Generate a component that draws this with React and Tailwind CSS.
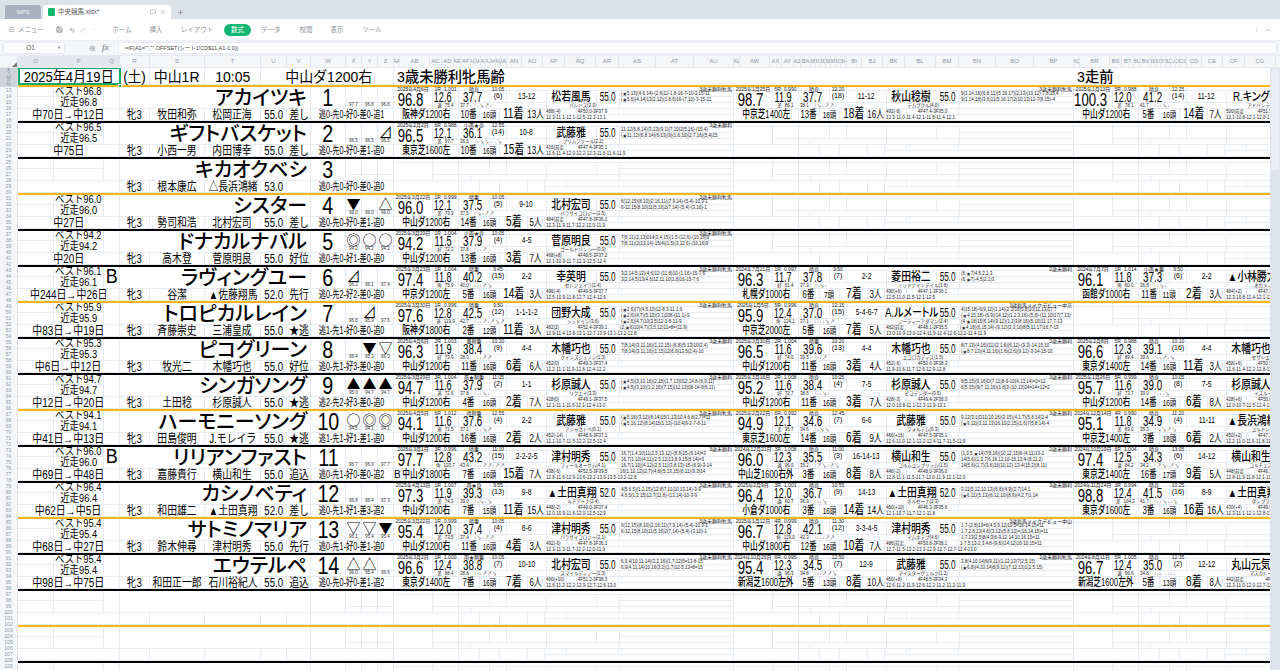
import React from "react";
import { Menu, Undo2, Redo2, ZoomIn, Plus, X, MessageSquare, EllipsisVertical, ChevronDown, Save } from "lucide-react";

const COLS = [
  ["AA", 6], ["AB", 30], ["AC", 12], ["AD", 12], ["AE", 7], ["AF", 10], ["AG", 5], ["AH", 5], ["AI", 5], ["AJ", 5], ["AK", 5],
  ["AL", 5], ["AM", 6], ["AN", 15], ["AO", 21], ["AP", 22], ["AQ", 31], ["AR", 23], ["AS", 37], ["AT", 38], ["AU", 40],
];
const COLS2 = ["AV", "AW", "AX", "AY", "AZ", "BA", "BB", "BC", "BD", "BE", "BF", "BG", "BH", "BI", "BJ", "BK", "BL", "BM", "BN", "BO", "BP"];
const COLS3 = ["BQ", "BR", "BS", "BT", "BU", "BV", "BW", "BX", "BY", "BZ", "CA", "CB", "CC", "CD", "CE", "CF", "CG", "CH", "CI", "CJ", "CK"];
const LEFT_COLS = [["O", 36], ["P", 50], ["Q", 16], ["R", 30], ["S", 55], ["T", 56], ["U", 26], ["V", 24], ["W", 35], ["X", 16], ["Y", 16], ["Z", 16]];

// date, race, ratio, weather, time, label, idx, f1, l3, pop, corner, jockey, wt, pass, pos, posv, l3b, arrows, winner, course, no, head, finish, ninki, wgt, split, laps
const R = (...a) => a;

const HORSES = [
  { best: "96.8", name: "アカイツキ", no: 1, period: "中70日→中12日", trainer: "牧田和弥", rider: "松岡正海", wt: "55.0", style: "差し", tally: "逃0-先0-好0-差0-追1", marks: ["", "", ""], vals: ["97.7", "96.8", "96.8"], runs: [
    R("2025年4月6日", "1R", "1.001", "晴良", "10:05", "3歳未勝利牝馬", "96.8", "12.6", "37.7", "(6)", "13-12", "松若風馬", "55.0", ["(★5,13)(4,6,14)-(2,6)12-1,8-16-7-10-3,15-11", "(★5,6)(4,14)13(2,12)(1,8,6)16-(7,10)-3-15-11"], "遠", "75.4", "37.7", "↑↓↘↗↓", "パレハス(2.0)", "阪神ダ1200右", "10番", "16頭", "11着", "13人", "488(-4)", "4F50.0-3F37.9", "12.3-11.1-12.1-12.5-12.3-13.1"),
    R("2025年1月25日", "5R", "0.990", "晴良", "12:20", "3歳未勝利牝馬", "98.7", "11.9", "37.7", "(18)", "11-12", "秋山稔樹", "55.0", ["9(1,14,18)(6,8,11)(5,16,17)(2,13)(10,12)-7,8,15,4", "9(1,14,18)(3,6)11(5,16,17)2(10,13)12-7(8,15)-4"], "差", "86.1", "38.1", "↑↘↓↗↗↓", "テムグクル(4.0)", "中京芝1400左", "13番", "18頭", "18着", "16人", "492(-8)", "4F47.4-3F35.3", "12.3-11.0-11.4-12.1-11.8-11.4-12.1"),
    R("2025年1月13日", "5R", "0.988", "晴良", "12:25", "3歳未勝利", "100.3", "12.0", "41.2", "(14)", "11-12", "R.キング", "55.0", [], "差", "78.1", "41.7", "↑↓↓↘↓", "アドバンテージ", "中山ダ1200右", "5番", "16頭", "14着", "7人", "500(前走", "4F51.5-3F40.2", "12.1-10.8-12.1-12.8-13.1"),
  ] },
  { best: "96.5", name: "ギフトバスケット", no: 2, period: "中75日", trainer: "小西一男", rider: "内田博幸", wt: "55.0", style: "差し", tally: "逃0-先0-好0-差1-追0", marks: ["", "", "⊿"], vals: ["96.5", "96.5", "96.5"], runs: [
    R("2025年2月2日", "6R", "0.988", "小雨★良", "12:55", "3歳未勝利", "96.5", "12.1", "36.1", "(14)", "10-8", "武藤雅", "55.0", ["11,12(6,8,14)(3,13)(9,1)(7,10)2(5,16)-(15,4)", "(★11,12)(6,8,14)(6,13)(9)(1,6,10)(2,7,16)(5,4)15"], "差", "97.7", "36.5", "↑↓↘↘↓→↘", "プリムファール(2.2)", "東京芝1600左", "10番", "16頭", "15着", "13人", "416(前走", "4F47.4-3F35.1", "12.6-11.4-12.0-12.2-12.3-11.6-11.6-11.9"),
  ] },
  { name: "キカオクベシ", no: 3, period: "", trainer: "根本康広", rider: "△長浜鴻緒", wt: "53.0", style: "", tally: "逃0-先0-好0-差0-追0", marks: ["", "", ""], vals: ["", "", ""], runs: [] },
  { best: "96.0", name: "シスター", no: 4, period: "中27日", trainer: "勢司和浩", rider: "北村宏司", wt: "55.0", style: "差し", tally: "逃0-先0-好0-差1-追0", marks: ["▼", "", "△"], vals: ["96.0", "96.0", "96.0"], runs: [
    R("2025年3月22日", "1R", "0.999", "晴重", "10:05", "3歳未勝利牝馬", "96.0", "12.1", "37.5", "(5)", "9-10", "北村宏司", "55.0", ["6(12,15)(8,10)(2,16,11)(7,9,14)-(5,4)-10,3-1", "6-12,15(8,10)11(5,16)2(7,14)-(5,4)-(3,10)-1"], "差", "73.9", "37.5", "↑↘↓↗↗", "バラサイコロジー(2.5)", "中山ダ1200右", "14番", "16頭", "5着", "5人", "484(前走", "4F47.8-3F36.1", "12.3-11.9-11.7-12.2-12.0-11.9"),
  ] },
  { best: "94.2", name: "ドナカルナバル", no: 5, period: "中20日", trainer: "高木登", rider: "菅原明良", wt: "55.0", style: "好位", tally: "逃0-先0-好1-差0-追0", marks: ["◎", "○", "○"], vals: ["94.2", "94.2", "94.2"], runs: [
    R("2025年3月29日", "1R", "1.004", "小雨★良", "10:05", "3歳未勝利牝馬", "94.2", "11.5", "37.9", "(4)", "4-5", "菅原明良", "55.0", ["7(8,11)(2,13)014(3,4,15)(1,5-(12,6)-(10,16)9", "7(8,11)(2(13,14)-15(4)(1,5)(3,12,6)-(10,16)9"], "好", "72.3", "37.8", "↑↓↓↗→", "ゴールドバンシー(0.9)", "中山ダ1200右", "13番", "16頭", "3着", "7人", "468(+8)", "4F49.5-3F37.2", "12.1-10.9-11.7-12.3-12.5-12.4"),
  ] },
  { best: "96.1", tag: "B", name: "ラヴィングユー", no: 6, period: "中244日→中26日", trainer: "谷潔", rider: "▲佐藤翔馬", wt: "52.0", style: "先行", tally: "逃0-先2-好2-差0-追0", marks: ["⊿", "", ""], vals: ["96.2", "96.1", "97.4"], runs: [
    R("2025年3月23日", "1R", "1.004", "晴重", "9:45", "3歳未勝利牝馬", "97.4", "11.8", "40.2", "(15)", "2-2", "幸英明", "55.0", ["3(2,14,5,13)(4,6)12-(11,8)10-(1,16)-15-7,6", "3(2,14,5)13(4,6)12,11,10(1,8)16-15-7,6"], "角", "75.9", "40.0", "↑↓↓↗↘", "セレジェイラ(2.4)", "中京ダ1200左", "5番", "16頭", "14着", "3人", "496(-4)", "4F49.5-3F37.7", "12.5-10.9-11.8-12.7-12.4-12.6"),
    R("2024年7月21日", "1R", "0.997", "晴良", "9:50", "2歳未勝利", "96.3", "11.7", "37.8", "(7)", "2-2", "菱田裕二", "55.0", ["(6,★7)4,5,2,1,3", "(6,★7)-4,5(2,1)3"], "好", "61.4", "37.9", "↑↓↘↓", "ミッドナイトデイル(1.8)", "札幌ダ1000右", "6番", "7頭", "7着", "3人", "490(+6)", "4F47.1-3F36.1", "12.5-11.0-11.5-12.1-12.5"),
    R("2024年7月7日", "1R", "1.014", "小雨★重", "9:50", "2歳新馬", "96.1", "11.8", "37.3", "(6)", "2-2", "▲小林勝太", "55.0", [], "角", "60.0", "36.8", "↑↓↘↓", "オカメノ", "函館ダ1000右", "11番", "11頭", "2着", "3人", "484(+2)", "4F47.2-3F36.0", "12.3-10.8-11.4-12.1-12.1"),
  ] },
  { best: "95.9", name: "トロピカルレイン", no: 7, period: "中83日→中19日", trainer: "斉藤崇史", rider: "三浦皇成", wt: "55.0", style: "★逃", tally: "逃1-先1-好0-差0-追0", marks: ["", "⊿", ""], vals: ["96.8", "95.9", "97.6"], runs: [
    R("2025年3月30日", "1R", "0.996", "晴重", "9:50", "3歳未勝利牝馬", "97.6", "12.8", "42.5", "(12)", "1-1-1-2", "団野大成", "55.0", ["(★2,6)(7)(4,5,10)12-8,3-11,1,9", "(★2,6)(4,7)(5,10)(3,1)208-(11,1)-9", "(★2,6)(4,7)10(3,5)12-1-8-11-9", "(2,★6)10(4,7)(3,5,12)11=8=(11,9)"], "逃", "119.9", "42.7", "↑↓↓↗↓↗↘↗", "シュドゥン(3.6)", "阪神ダ1800右", "2番", "12頭", "11着", "3人", "482(2)", "4F52.4-3F39.1", "12.9-11.4-13.8-13.1-12.7-13.9-13.1-13.2-12.8"),
    R("2025年1月5日", "5R", "0.996", "晴良", "12:15", "3歳新馬メイクデビュー中京", "95.9", "12.4", "37.0", "(15)", "5-4-6-7", "A.ルメートル", "55.0", ["4(15,18)-6(9,12)(1,14)(2,3)16(5,8)10(11,13)17,7", "(★4,15,18)-(6,9)(14,12)(1,2,3,16)-(5,8)-(11,10)17(7,13)", "(4,★18)15(6,14)(9,12)(1,2)3(8,16)(5,10)11,17,7-13", "(★4,18)(6,15,14)-(9,12)(2,3,10)8(5,11,17)16,7-13"], "角", "124.1", "37.1", "↑↓↓↓↘↗", "ジーティーアダマン(2.4)", "中京芝2000左", "5番", "16頭", "7着", "5人", "482(前走", "4F48.1-3F35.5", "13.0-10.9-13.0-12.4-11.9-12.4-12.6-12.2-11.4-11.9"),
  ] },
  { best: "95.3", name: "ピコグリーン", no: 8, period: "中6日→中12日", trainer: "牧光二", rider: "木幡巧也", wt: "55.0", style: "好位", tally: "逃0-先1-好3-差0-追0", marks: ["", "▼", "▽"], vals: ["96.4", "95.3", "96.3"], runs: [
    R("2025年4月6日", "2R", "1.003", "曇稍重", "10:20", "3歳未勝利", "96.3", "11.9", "38.4", "(9)", "4-4", "木幡巧也", "55.0", ["7(8,14)(3,11,16)(1,12,15)-(6,8)(5,13)10(2,4)", "7(8,14)(3,11,16)(1,15)12(6,9)13,5(2,4)-10"], "好", "73.9", "38.3", "↑↓↓↗↗", "クインズジュノン(1.3)", "中山ダ1200右", "11番", "16頭", "6着", "6人", "452(0)", "4F49.3-3F37.4", "12.2-11.1-11.9-12.8-12.4-12.2"),
    R("2025年3月30日", "2R", "1.004", "晴重", "10:20", "3歳未勝利", "96.5", "11.6", "39.6", "(13)", "4-4", "木幡巧也", "55.0", ["8(7,13)(4,16)(11)(2,1,6)(6,12)-(9,3)-14,15,10", "(★8,7,13)(4,11,16)(1,6)(2,6)(9,12)-3-14-15-10"], "好", "74.0", "39.5", "↑↓↓↗", "エコロカディス(1.5)", "中山ダ1200右", "11番", "16頭", "3着", "4人", "452(-6)", "4F50.0-3F38.3", "11.9-10.6-11.7-12.6-12.9-12.8"),
    R("2025年2月8日", "5R", "0.988", "晴良", "10:10", "3歳未勝利", "96.6", "12.3", "39.1", "(16)", "4-4", "木幡巧也", "55.0", [], "好", "89.4", "39.6", "↑↓↓↗↓↘", "セザレエル", "東京ダ1400左", "14番", "16頭", "11着", "3人", "458(+6)", "4F50.5-3F38.3", "12.6-11.4-12.2-12.8-12.6"),
  ] },
  { best: "94.7", name: "シンガソング", no: 9, period: "中12日→中20日", trainer: "土田稔", rider: "杉原誠人", wt: "55.0", style: "★逃", tally: "逃2-先2-好3-差0-追0", marks: ["▲", "▲", "▲"], vals: ["95.0", "94.7", "94.7"], runs: [
    R("2025年3月29日", "3R", "1.004", "雨★稍重", "11:05", "3歳未勝利", "94.7", "11.6", "37.9", "(2)", "1-1", "杉原誠人", "55.0", ["(★4,5)(3,10,16)(2,15)(1,7,13)012,14,8-(6,9,11)", "(★4,5)(3,10)(1,2,16)(7,15)(12,13)08-14-9(6,11)"], "逃", "72.6", "37.8", "↑↓↓↘↓", "リクエイ(3.3)", "中山ダ1200右", "4番", "16頭", "2着", "7人", "428(0)", "4F49.1-3F37.5", "12.1-11.1-11.6-12.1-12.4-13.0"),
    R("2025年3月16日", "2R", "1.008", "晴良", "10:25", "3歳未勝利", "95.2", "11.6", "38.4", "(4)", "7-5", "杉原誠人", "55.0", ["6(5,15)(9,16)D(7,11)8-9-10(4,13,14)=2=12", "6(5,15)(9(7,11,16)(1,8)3-(10,13)24=14=12=2"], "好", "72.7", "38.5", "↑↓↓↘↓", "ビコテンダー(0.5)", "中山ダ1200右", "11番", "16頭", "3着", "7人", "428(-3)", "4F49.4-3F38.3", "12.0-10.8-11.1-12.3-12.9-13.1"),
    R("2025年1月26日", "5R", "0.999", "晴良", "10:05", "3歳未勝利", "95.7", "11.6", "39.0", "(8)", "7-5", "杉原誠人", "55.0", [], "好", "73.7", "39.0", "↑↓↓↓↘", "イズルー", "中山ダ1200右", "14番", "16頭", "6着", "8人", "428(+6)", "4F50.0-3F38.0", "12.0-10.7-11.5-12.4-12.6"),
  ] },
  { best: "94.1", name: "ハーモニーソング", no: 10, period: "中41日→中13日", trainer: "田島俊明", rider: "J.モレイラ", wt: "55.0", style: "★逃", tally: "逃1-先1-好1-差1-追0", marks: ["○", "◎", "◎"], vals: ["94.5", "94.1", "94.1"], runs: [
    R("2025年4月5日", "6R", "1.012", "晴稍重", "12:55", "3歳未勝利牝馬", "94.1", "11.6", "37.6", "(4)", "2-2", "武藤雅", "55.0", ["(★5,16)(3,12)(8,14)15(1,13)10,4,6,8(2,7)=11", "(★5,16,12)(8,14)15(1,13)-(10,4)9-2-7-8-11"], "逃", "71.5", "37.1", "↑↓↓↘↗", "アシャカトベ(0.1)", "中山ダ1200右", "16番", "16頭", "2着", "2人", "452(-14)", "4F48.6-3F37.1", "12.1-10.7-11.5-12.2-12.5-12.4"),
    R("2025年2月22日", "6R", "0.992", "晴良", "12:45", "3歳未勝利", "94.9", "12.1", "34.6", "(7)", "6-6", "武藤雅", "55.0", ["9,12(3,1)D11(10,16)(2,15)(4,1,7)(5,8,14)2-4", "(★9,12)(3,11,13)16,10(2,15)(1,6)7(5,8,14)-4"], "差", "95.7", "34.6", "↑↓↘↘", "フォルテム(0.3)", "東京芝1600左", "14番", "16頭", "6着", "9人", "466(+16)", "4F47.5-3F35.1", "12.6-11.0-12.1-12.2-12.4-11.7-11.5-11.9"),
    R("2024年12月14日", "4R", "0.990", "晴良", "11:20", "2歳未勝利", "95.1", "11.8", "34.9", "(4)", "11-11", "▲長浜鴻緒", "55.0", [], "差", "83.0", "35.3", "↑↘↘↗↘→", "ユルドンク", "中京芝1400左", "3番", "18頭", "6着", "2人", "450(+2)", "4F47.2-3F35.4", "12.2-11.0-11.6-11.8-11.9"),
  ] },
  { best: "96.0", tag: "B", name: "リリアンファスト", no: 11, period: "中69日→中48日", trainer: "嘉藤貴行", rider: "横山和生", wt: "55.0", style: "追込", tally: "逃0-先1-好0-差0-追2", marks: ["", "", ""], vals: ["96.7", "96.0", "97.7"], blink: true, runs: [
    R("2025年3月1日", "3R", "0.996", "晴重", "11:10", "3歳未勝利", "97.7", "12.8", "43.2", "(15)", "2-2-2-5", "津村明秀", "55.0", ["16,7(1,4,10)11(2,5,13,12)-(8,6)15-(6,14)=3", "16,7(1,10)(4,11)(2,5,12)13,8,9,15(6,14)=3", "16,7(1,10)(4,12)(2,5,11)(3,8,13)-15-(6,9)-3-14", "16(1,10,12)(2,7)(4,8)(5,13,15)(6,11)(9,3)14"], "角", "120.7", "43.4", "↑↓↓↗↗↓↗↗", "フィールオーサム(4.1)", "中山ダ1800右", "7番", "16頭", "15着", "7人", "438(-6)", "4F52.5-3F39.5", "12.8-11.6-12.9-13.6-13.2-13.0-13.5-13.2-12.8"),
    R("2024年12月21日", "3R", "1.008", "晴良", "11:00", "2歳未勝利", "96.0", "12.3", "35.5", "(3)", "16-14-13", "横山和生", "55.0", ["(1,3,5,★14)7(8,16)(10,12,15)8-(4,11)13-2", "14(5,6)(1,3,7)6,16,12,10-15,13,4-(8,11,2)", "14(5,6)(1,7)(3,6)16(10,12)-13-4(15,2)(8,11)"], "遠", "96.0", "35.2", "↑↗↘↑↗↘", "コルムユンプリュム(1.5)", "中山芝1600右外", "3番", "16頭", "8着", "8人", "446(-2)", "4F48.0-3F36.0", "12.8-11.1-11.5-11.7-12.0-11.9-12.1-12.0"),
    R("2024年10月19日", "6R", "1.004", "晴良", "13:05", "2歳新馬", "97.4", "12.5", "34.3", "(6)", "14-12", "横山和生", "55.0", [], "遠", "84.2", "34.2", "↑↗↘↑↗↘", "コルチェスタ", "東京芝1400左", "16番", "17頭", "9着", "5人", "448(前走", "4F46.3-3F34.1", "12.8-11.9-11.8-12.1-11.8"),
  ] },
  { best: "96.4", name: "カシノベティ", no: 12, period: "中62日→中5日", trainer: "和田雄二", rider: "▲土田真翔", wt: "52.0", style: "差し", tally: "逃0-先1-好1-差3-追2", marks: ["", "", ""], vals: ["96.8", "96.4", "97.3"], runs: [
    R("2025年4月13日", "1R", "1.007", "雨★良", "9:55", "3歳未勝利牝馬", "97.3", "11.9", "39.3", "(13)", "9-8", "▲土田真翔", "52.0", ["4(5,6,5)(1,2,15)(12,8)7,11(10,13,14)-3-9", "4,6,5(1,2,15)12,7(11,8)-(13,14)-10-3-9"], "差", "74.3", "39.0", "↑↓↘↓↘", "ルチアーナ(2.4)", "中山ダ1200右", "7番", "15頭", "11着", "15人", "448(-2)", "4F49.0-3F37.4", "12.0-10.9-11.6-12.0-12.5-12.9"),
    R("2025年2月9日", "3R", "1.001", "晴良", "10:55", "3歳未勝利", "96.4", "12.0", "36.7", "(9)", "14-13", "▲土田真翔", "52.0", ["3,11(5,12,10,13)(6,8)(4,9)(2,7)14,1", "(★6,11)(5,13)(6,12,10)(8,9)(4,2,7)1,14"], "遠", "60.7", "36.9", "↑↓↓↘", "ボルセーナ(2.3)", "小倉ダ1000右", "3番", "16頭", "14着", "14人", "450(+10)", "4F46.3-3F35.6", "12.1-10.7-11.7-12.1-11.8"),
    R("2024年11月24日", "3R", "0.994", "晴良", "10:25", "2歳未勝利", "98.8", "12.4", "41.5", "(16)", "8-9", "▲土田真翔", "55.0", [], "差", "104.3", "41.7", "↑↓↓↘↓↓↘", "ダンプファ", "東京ダ1600左", "3番", "16頭", "16着", "16人", "430(+4)", "4F49.9-3F38.3", "12.3-11.1-12.1-12.8-13.1"),
  ] },
  { best: "95.4", name: "サトミノマリア", no: 13, period: "中68日→中27日", trainer: "鈴木伸尋", rider: "津村明秀", wt: "55.0", style: "先行", tally: "逃0-先1-好0-差1-追0", marks: ["▽", "▽", "▼"], vals: ["96.1", "95.4", "95.4"], runs: [
    R("2025年3月22日", "1R", "0.999", "晴重", "10:05", "3歳未勝利牝馬", "95.4", "12.0", "37.4", "(4)", "8-6", "津村明秀", "55.0", ["6(12,15)(8,10)(2,16,11)(7,9,14)-(5,4)-10,3-1", "6-12,15(8,10)11(5,16)2(7,14)-(5,4)-(3,10)-1"], "差", "73.5", "37.4", "↑↘↓↗↗", "バラサイコロジー(2.1)", "中山ダ1200右", "11番", "16頭", "4着", "3人", "492(-6)", "4F47.8-3F36.1", "12.3-11.3-11.7-12.2-12.0-11.9"),
    R("2025年1月12日", "4R", "0.999", "晴良", "11:30", "3歳新馬メイクデビュー中山", "96.7", "12.8", "42.1", "(12)", "3-3-4-5", "津村明秀", "55.0", ["1,7-(2,8)13=6(4,5,9,12)10,5=16-14,15=11", "1,7,2,8,13(4,6)(3,12)(5,8,10)=(16,14,15)=11", "1,7,13(2,5)8(4,3)6-9,12,14,10,16,15=11", "1-7,5,13-2,3,4,8-(9,6)(14,12)16-10,15=11"], "角", "119.0", "42.3", "↑↓↓↓↗↗", "イムホテプ(4.6)", "中山ダ1800右", "12番", "16頭", "10着", "7人", "486(前走", "4F50.8-3F38.1", "12.7-11.5-13.2-13.3-12.9-12.7-12.7-12.4-13.0"),
  ] },
  { best: "95.4", name: "エウテルペ", no: 14, period: "中98日→中75日", trainer: "和田正一郎", rider: "石川裕紀人", wt: "55.0", style: "追込", tally: "逃0-先0-好0-差1-追2", marks: ["△", "△", ""], vals: ["96.0", "95.4", "96.6"], runs: [
    R("2025年3月2日", "1R", "1.000", "雨★稍重", "10:05", "3歳未勝利牝馬", "96.6", "12.4", "38.8", "(7)", "10-10", "北村宏司", "55.0", ["6,9,4(10,11,14)(3,2,16)(1,7,12)5=13-8-15", "6,9(4,11,14)10,16(3,2)(1,7)12-5,13=8=15"], "差", "88.4", "38.8", "↑↓↓↗↗↘", "スマイルディジー(1.3)", "東京ダ1400左", "7番", "16頭", "7着", "6人", "460(+10)", "4F51.2-3F38.3", "12.6-11.2-12.2-12.9-12.7-12.6-13.0"),
    R("2024年10月26日", "6R", "0.995", "晴良", "12:50", "2歳未勝利牝馬", "95.4", "12.3", "34.5", "(7)", "12-9", "武藤雅", "55.0", ["3,8(4,10,14)6(9,11)(1,12,13)7(2,5,15)", "(★6,8)(4,10,14)6(9,11)(7,12,13)1(2,5,15)"], "遠", "96.3", "34.8", "↑↓↓↗↗↘", "マイスターヴェルク(1.2)", "新潟芝1600左外", "5番", "13頭", "8着", "10人", "450(+8)", "4F48.5-3F34.3", "12.6-11.2-11.9-12.6-12.2-11.2-11.2-11.9"),
    R("2024年8月11日", "5R", "1.005", "晴良", "12:35", "2歳新馬", "96.7", "12.4", "35.0", "(2)", "12-12", "丸山元気", "55.0", [], "遠", "96.6", "34.8", "↑↓↓→↑↓↓", "マスカレード", "新潟芝1600左外", "5番", "13頭", "8着", "8人", "442(前走", "4F47.8", "12.3-11.0-12.0-12.7-12.1"),
  ] },
  {},
  {},
  {},
];

const grid = "border-r border-b border-[#e6eaf2]";
const center = "flex items-center justify-center whitespace-nowrap";

const RunBlock = ({ run, tag }) => {
  const [date, race, ratio, weather, time, label, idx, f1, l3, pop, corner, jockey, wt, pass, pos, posv, l3b, arrows, winner, course, no, head, finish, ninki, wgt, split, laps] = run || [];
  const lines = pass || [];
  return (
    <div className="flex flex-col shrink-0 w-[340px] text-black">
      <div className="flex h-[4px] text-[5px] leading-[4px] text-[#222]">
        <div className={`w-[39px] ${grid} ${center}`}>{date}</div>
        <div className={`w-[26px] ${grid} ${center} gap-[3px]`}><span>{race}</span><span>{ratio}</span></div>
        <div className={`w-[31px] ${grid} ${center}`}>{weather}</div>
        <div className={`w-[17px] ${grid} ${center}`}>{time}</div>
        <div className={`flex-1 ${grid} flex justify-end whitespace-nowrap pr-px`}>{label}</div>
      </div>
      <div className="flex h-[18px]">
        <div className={`w-[39px] pr-[4px] ${grid} ${center}`}>
          <span className="inline-block scale-x-[.73] text-[18px] leading-none">{idx}</span>
        </div>
        <div className="flex flex-col w-[187px]">
          <div className="flex h-[12px]">
            <div className={`w-[26px] pr-[5px] ${grid} ${center}`}><span className="inline-block scale-x-[.65] text-[14px] leading-none">{f1}</span></div>
            <div className={`w-[31px] pr-[3px] ${grid} ${center}`}><span className="inline-block scale-x-[.7] text-[14px] leading-none">{l3}</span></div>
            <div className={`w-[17px] ${grid} ${center} text-[7px]`}>{pop}</div>
            <div className={`w-[40px] ${grid} ${center}`}><span className="inline-block scale-x-[.75] text-[9px] leading-none">{corner}</span></div>
            <div className={`w-[50px] ${grid} ${center}`}><span className="inline-block scale-x-[.82] text-[12px] leading-none font-medium [font-feature-settings:'palt']">{jockey}</span></div>
            <div className={`w-[23px] ${grid} ${center}`}><span className="inline-block scale-x-[.68] text-[12px] leading-none">{wt}</span></div>
          </div>
          <div className="flex h-[6px] text-[4.5px] leading-[6px] text-[#222]">
            <div className={`w-[26px] ${grid} ${center} gap-[3px]`}><span>{pos}</span><span>{posv}</span></div>
            <div className={`w-[12px] ${grid} ${center}`}>{l3b}</div>
            <div className={`w-[76px] ${grid} whitespace-nowrap pl-[3px] tracking-[.5px]`}>{arrows}</div>
            <div className={`w-[73px] ${grid} ${center}`}>{winner}</div>
          </div>
        </div>
        <div className="flex flex-col w-[114px] text-[4.5px] leading-[6px] text-[#222]">
          <div className={`h-[6px] ${grid} whitespace-nowrap pl-px`}>{lines[0]}</div>
          <div className={`h-[6px] ${grid} whitespace-nowrap pl-px`}>{lines[1]}</div>
          <div className={`h-[6px] ${grid} whitespace-nowrap pl-px`}>{lines[2]}</div>
        </div>
      </div>
      <div className="flex h-[12px]">
        <div className={`w-[65px] ${grid} ${center} relative`}>
          {tag && <span className="absolute left-0 top-0 text-[10px] leading-[12px]">{tag}</span>}
          <span className="inline-block scale-x-[.7] text-[11px] leading-none font-medium">{course}</span>
        </div>
        <div className={`w-[21px] ${grid} flex items-end justify-center whitespace-nowrap`}><span className="inline-block scale-x-[.7] text-[11px] leading-[11px]">{no}</span></div>
        <div className={`w-[20px] ${grid} flex items-end justify-center whitespace-nowrap`}><span className="inline-block scale-x-[.72] text-[9px] leading-[10px]">{head}</span></div>
        <div className={`w-[28px] ${grid} flex items-end justify-center whitespace-nowrap`}><span className="inline-block scale-x-[.72] text-[14px] leading-[13px]">{finish}</span></div>
        <div className={`w-[17px] ${grid} flex items-end justify-center whitespace-nowrap`}><span className="inline-block scale-x-[.72] text-[11px] leading-[11px]">{ninki}</span></div>
        <div className="flex flex-col flex-1 text-[4.5px] leading-[6px] text-[#222]">
          <div className="flex h-[6px]">
            <div className={`w-[22px] ${grid} whitespace-nowrap pl-px`}>{wgt}</div>
            <div className={`w-[52px] ${grid} ${center}`}>{split}</div>
            <div className={`flex-1 ${grid} whitespace-nowrap pl-px`}>{lines[3]}</div>
          </div>
          <div className={`h-[6px] ${grid} whitespace-nowrap pl-px`}>{laps}</div>
        </div>
      </div>
    </div>
  );
};

const RowHeader = ({ start }) => (
  <div className="w-[18px] shrink-0 flex flex-col bg-[#f4f6f9] border-r border-[#dfe3ea] text-[5px] leading-[6px] text-[#8a98ad] text-center">
    {[0, 1, 2, 3, 4, 5].map((i) => (
      <div key={i} className="h-[6px]">{start + i}</div>
    ))}
  </div>
);

const HorseRow = ({ horse, index }) => {
  const orange = index % 3 === 2;
  return (
    <div className="flex h-[36px] shrink-0">
      <RowHeader start={13 + index * 6} />
      <div className={`flex flex-1 overflow-hidden border-b-2 ${orange ? "border-[#ffb514]" : "border-black"}`}>
        <div className="flex flex-col w-[376px] shrink-0">
          <div className="flex h-[22px]">
            <div className="flex flex-col w-[36px]">
              <div className={`h-[10px] ${grid}`}></div>
              <div className={`h-[12px] ${grid}`}></div>
            </div>
            <div className="flex flex-col w-[50px]">
              <div className={`h-[10px] ${grid} ${center}`}>
                {horse.best && <span className="inline-block scale-x-[.85] text-[11px] leading-none">ベスト{horse.best}</span>}
              </div>
              <div className={`h-[12px] ${grid} ${center}`}>
                {horse.best && <span className="inline-block scale-x-[.85] text-[11px] leading-none">近走{horse.best}</span>}
              </div>
            </div>
            <div className={`w-[16px] ${grid} flex justify-center`}>
              <span className="inline-block scale-x-[.9] text-[20px] leading-[18px]">{horse.tag}</span>
            </div>
            <div className={`w-[191px] ${grid} flex items-center justify-end whitespace-nowrap pr-[3px]`}>
              <span className="text-[20px] leading-none font-medium [font-feature-settings:'palt']">{horse.name}</span>
            </div>
            <div className={`w-[35px] ${grid} ${center}`}>
              <span className="inline-block scale-x-[.82] text-[24px] leading-none">{horse.no}</span>
            </div>
            {[0, 1, 2].map((i) => (
              <div key={i} className="flex flex-col w-[16px]">
                <div className={`h-[16px] ${grid} ${center} text-[14px] leading-[16px] font-['Noto_Sans_CJK_JP',sans-serif]`}>{horse.marks?.[i]}</div>
                <div className={`h-[6px] ${grid} ${center} text-[4.5px] text-[#333]`}>{horse.vals?.[i]}</div>
              </div>
            ))}
          </div>
          <div className="flex h-[12px]">
            <div className={`w-[102px] ${grid} ${center}`}><span className="inline-block scale-x-[.83] text-[12px] leading-none">{horse.period}</span></div>
            <div className={`w-[30px] ${grid} ${center}`}><span className="inline-block scale-x-[.8] text-[12px] leading-none">{horse.no && "牝3"}</span></div>
            <div className={`w-[55px] ${grid} ${center}`}><span className="inline-block scale-x-[.82] text-[12px] leading-none">{horse.trainer}</span></div>
            <div className={`w-[56px] ${grid} ${center}`}><span className="inline-block scale-x-[.82] text-[12px] leading-none">{horse.rider}</span></div>
            <div className={`w-[26px] ${grid} ${center}`}><span className="inline-block scale-x-[.8] text-[12px] leading-none">{horse.wt}</span></div>
            <div className={`w-[24px] ${grid} ${center}`}><span className="inline-block scale-x-[.82] text-[12px] leading-none">{horse.style}</span></div>
            <div className={`w-[83px] ${grid} ${center}`}><span className="inline-block scale-x-[.72] text-[10px] leading-none">{horse.tally}</span></div>
          </div>
        </div>
        <RunBlock run={horse.runs?.[0]} tag={horse.blink ? "B" : null} />
        <RunBlock run={horse.runs?.[1]} />
        <RunBlock run={horse.runs?.[2]} />
      </div>
    </div>
  );
};

const ColHead = ({ name, w, active }) => (
  <div
    className={`shrink-0 h-full flex items-center justify-center overflow-hidden border-r border-[#e3e7ed] text-[6px] text-[#8f99a8] ${active ? "bg-[#e3e6eb]" : ""}`}
    style={{ width: w }}
  >
    {name}
  </div>
);

export default function App() {
  return (
    <div className="w-[1280px] h-[670px] overflow-hidden bg-white flex flex-col font-['Liberation_Sans','Noto_Sans_CJK_JP',sans-serif] text-black">
      {/* タブ */}
      <div className="flex items-end h-[19px] shrink-0 bg-[#dde2e8] pl-[5px]">
        <div className="w-[36px] h-[14px] rounded-t-[3px] bg-[#a9b0c1] flex items-center justify-center text-[6px] text-[#eef0f4]">WPS</div>
        <div className="w-[128px] h-[14px] ml-[2px] rounded-t-[3px] bg-white flex items-center pl-[5px] text-[6.5px] text-[#555]">
          <span className="w-[7px] h-[8px] rounded-[1px] bg-[#12b76f] mr-[3px]"></span>
          中央競馬.xlsx*
          <MessageSquare className="ml-auto w-[6px] h-[6px] text-[#999]" />
          <X className="ml-[4px] mr-[5px] w-[6px] h-[6px] text-[#999]" />
        </div>
        <Plus className="ml-[6px] mb-[3px] w-[7px] h-[7px] text-[#777]" />
      </div>
      {/* メニュー */}
      <div className="flex items-center h-[21px] shrink-0 bg-white pl-[8px] text-[6.5px] text-[#8b9098]">
        <Menu className="w-[7px] h-[7px]" />
        <span className="ml-[3px]">メニュー</span>
        <Save className="ml-[12px] w-[7px] h-[7px] text-[#666]" />
        <Undo2 className="ml-[6px] w-[6px] h-[6px] text-[#666]" />
        <Redo2 className="ml-[5px] w-[6px] h-[6px] text-[#bbb]" />
        <ChevronDown className="ml-[5px] w-[5px] h-[5px] text-[#bbb]" />
        <div className="flex items-center ml-[12px] whitespace-nowrap">
          <span className="w-[28px] text-center">ホーム</span>
          <span className="w-[40px] text-center">挿入</span>
          <span className="w-[42px] text-center">レイアウト</span>
          <span className="w-[39px] flex justify-center">
            <span className="w-[27px] h-[12px] rounded-full bg-[#12b76f] text-white flex items-center justify-center">数式</span>
          </span>
          <span className="w-[28px] text-center">データ</span>
          <span className="w-[42px] text-center">校閲</span>
          <span className="w-[20px] text-center">表示</span>
          <span className="w-[50px] text-center">ツール</span>
        </div>
        <EllipsisVertical className="ml-auto w-[7px] h-[7px] text-[#ccc]" />
        <ChevronDown className="ml-[4px] mr-[8px] w-[8px] h-[8px] text-[#aaa]" />
      </div>
      {/* 数式バー */}
      <div className="flex items-center h-[15px] shrink-0 bg-[#f3f5f7] pl-[3px] pr-[3px] border-t border-[#eceff3]">
        <div className="w-[62px] h-[12px] bg-white border border-[#e5e8ee] rounded-[2px] flex items-center text-[6.5px] text-[#555]">
          <span className="flex-1 text-center">O1</span>
          <span className="pr-[3px] text-[4px] text-[#777]">▼</span>
        </div>
        <ZoomIn className="ml-[24px] w-[7px] h-[7px] text-[#888]" />
        <span className="ml-[6px] w-[10px] text-[9px] italic text-[#666] font-['Liberation_Serif',serif]">fx</span>
        <div className="ml-[6px] flex-1 h-[12px] bg-white border border-[#e5e8ee] rounded-[2px] flex items-center pl-[6px] text-[5.5px] text-[#444] whitespace-nowrap">
          =IF(A1="","",OFFSET(シート1!CD$11,A1-1,0))
        </div>
      </div>
      {/* 列ヘッダー */}
      <div className="flex h-[13px] shrink-0 bg-[#f4f6f8] border-y border-[#e6e9ee] overflow-hidden">
        <div className="w-[18px] shrink-0 bg-[#f4f6f8] border-r border-[#e3e7ed] flex items-end justify-end">
          <span className="w-0 h-0 border-l-[5px] border-l-transparent border-b-[5px] border-b-[#777]"></span>
        </div>
        {LEFT_COLS.map(([n, w], i) => <ColHead key={n} name={n} w={w} active={i < 3} />)}
        {COLS.map(([n, w]) => <ColHead key={n} name={n} w={w} />)}
        {COLS.map(([, w], i) => <ColHead key={COLS2[i]} name={COLS2[i]} w={w} />)}
        {COLS.map(([, w], i) => <ColHead key={COLS3[i]} name={COLS3[i]} w={w} />)}
      </div>
      {/* シート */}
      <div className="relative flex flex-1 min-h-0 overflow-hidden">
        <div className="flex flex-col w-[1270px] shrink-0 overflow-hidden">
          <div className="flex h-[19px] shrink-0">
            <div className="w-[18px] shrink-0 bg-[#cfd4dc] border-r border-[#dfe3ea] flex flex-col text-[4px] leading-[3.4px] text-center text-[#77849a]">
              {[8, 9, 10, 11, 12].map((n) => <div key={n}>{n}</div>)}
            </div>
            <div className="flex flex-1 overflow-hidden border-b-2 border-[#ffb514]">
              <div className={`relative w-[102px] shrink-0 ${center}`}>
                <span className="inline-block scale-x-[.87] text-[15px] leading-none">2025年4月19日</span>
                <div className="absolute -top-px left-0 -right-px bottom-0 border-2 border-[#12a86a]"></div>
              </div>
              <div className={`w-[30px] shrink-0 ${grid} ${center}`}><span className="inline-block scale-x-[.9] text-[15px] leading-none">(土)</span></div>
              <div className={`w-[55px] shrink-0 ${grid} ${center}`}><span className="inline-block scale-x-[.93] text-[15px] leading-none">中山1R</span></div>
              <div className={`w-[56px] shrink-0 ${grid} ${center}`}><span className="inline-block scale-x-[.93] text-[15px] leading-none">10:05</span></div>
              <div className={`w-[133px] shrink-0 ${grid} ${center}`}><span className="inline-block ml-[4px] scale-x-[.93] text-[15px] leading-none">中山ダ1200右</span></div>
              <div className="w-[340px] shrink-0 flex items-center pl-[3px] whitespace-nowrap">
                <span className="inline-block origin-left scale-x-[.95] text-[15px] leading-none font-medium">3歳未勝利牝馬齢</span>
              </div>
              <div className="w-[343px] shrink-0"></div>
              <div className="flex-1 flex items-center whitespace-nowrap">
                <span className="inline-block origin-left scale-x-[.95] text-[15px] leading-none font-medium">3走前</span>
              </div>
            </div>
          </div>
          {HORSES.map((h, i) => <HorseRow key={i} horse={h} index={i} />)}
        </div>
        <div className="absolute left-[118px] top-[16px] w-[4px] h-[4px] bg-[#12a86a] border border-white"></div>
        <div className="flex-1 bg-[#dfe4ec] flex justify-center pt-[2px]">
          <div className="w-[8px] h-[100px] bg-[#eaeef3] rounded-[2px]"></div>
        </div>
      </div>
    </div>
  );
}
